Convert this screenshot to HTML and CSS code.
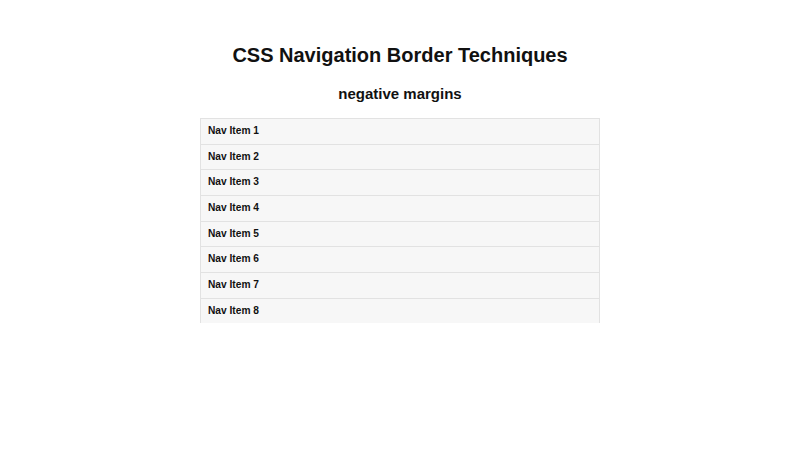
FILE: index.html
```html
<!DOCTYPE html>
<html lang="en">
<head>
    <meta charset="UTF-8">
    <meta name="viewport" content="width=device-width, initial-scale=1.0">
    <title>CSS Navigation Border Techniques</title>
    <link rel="stylesheet" href="styles.css">
</head>
<body>

    <div class="container">
        <h1>CSS Navigation Border Techniques</h1>

        <h2>negative margins</h2>

        <!-- each item has a full border, the -1px margin collapses the doubled lines -->
        <ul class="nav">
            <li><a href="#">Nav Item 1</a></li>
            <li><a href="#">Nav Item 2</a></li>
            <li><a href="#">Nav Item 3</a></li>
            <li><a href="#">Nav Item 4</a></li>
            <li><a href="#">Nav Item 5</a></li>
            <li><a href="#">Nav Item 6</a></li>
            <li><a href="#">Nav Item 7</a></li>
            <li><a href="#">Nav Item 8</a></li>
        </ul>
    </div>

</body>
</html>
```

FILE: styles.css
```css
body {
    font-family: "Liberation Sans", Arial, sans-serif;
    background-color: #fff;
    color: #111;
    margin: 0;
    padding: 0;
}

.container {
    width: 400px;
    margin: 0 auto;
    text-align: center;
}

h1 {
    font-size: 20px;
    line-height: 23px;
    margin: 44px 0 0;
}

h2 {
    font-size: 15px;
    line-height: 17px;
    margin: 18px 0 0;
}

.nav {
    list-style: none;
    margin: 16px 0 0;
    padding: 0;
    text-align: left;
}

.nav li {
    background: #f7f7f7;
    border: 1px solid #e2e2e2;
    margin-bottom: -1px;
}

.nav a {
    display: block;
    padding: 5px 7px;
    font-size: 10.2px;
    line-height: 14.65px;
    font-weight: bold;
    color: #111;
    text-decoration: none;
}
```
